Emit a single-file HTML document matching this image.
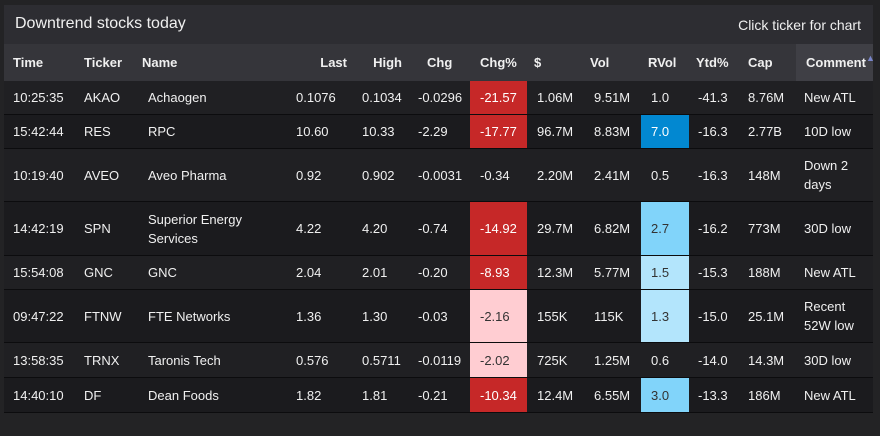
<!DOCTYPE html>
<html><head><style>
body{margin:0;width:880px;height:436px;background:#232325;font-family:"Liberation Sans",Arial,sans-serif;color:#f0f0f0;overflow:hidden;position:relative}
.title{position:absolute;left:4px;top:5px;width:869px;height:39px;background:#2d2d32}
.title .l{position:absolute;left:11px;top:10px;font-size:16px}
.title .r{position:absolute;right:12px;top:12px;font-size:14px}
.row{position:absolute;left:4px;width:869px;display:flex;font-size:13px;border-bottom:1px solid #0c0c0e;box-sizing:border-box}
.row>div{box-sizing:border-box;display:flex;align-items:center;padding-left:8px;line-height:19px}
.hdr{top:44px;height:37px;background:#35353a;font-weight:bold;border:none}
.c1{width:74px;padding-left:9px!important}.c2{width:62px;padding-left:6px!important}.c3{width:148px}.c4{width:66px}.c5{width:56px}.c6{width:60px}.c7{width:57px;padding-left:10px!important}.c8{width:56px;padding-left:10px!important}.c9{width:58px;padding-left:11px!important}.c10{width:48px;padding-left:10px!important}.c11{width:51px;padding-left:9px!important}.c12{width:56px}.c13{width:77px}
.red{background:#c62828;color:#fff}.pink{background:#ffcdd2;color:#333}
.blue{background:#0288d1;color:#fff}.lb{background:#81d4fa;color:#333}.vlb{background:#b3e5fc;color:#333}
.a{background:#202023}.b{background:#1b1b1e}
</style></head><body>
<div class="title"><span class="l">Downtrend stocks today</span><span class="r">Click ticker for chart</span></div>
<div class="row hdr"><div class="c1">Time</div><div class="c2">Ticker</div><div class="c3" style="padding-left:2px">Name</div><div class="c4" style="justify-content:flex-end;padding-right:7px">Last</div><div class="c5" style="justify-content:flex-end;padding-right:8px">High</div><div class="c6" style="padding-left:17px">Chg</div><div class="c7">Chg%</div><div class="c8" style="padding-left:7px!important">$</div><div class="c9" style="padding-left:7px!important">Vol</div><div class="c10" style="padding-left:7px!important">RVol</div><div class="c11" style="padding-left:7px!important">Ytd%</div><div class="c12">Cap</div><div class="c13" style="background:#3f3f45;padding-left:10px">Comment<span style="color:#7986cb;font-size:9px;margin-top:-8px">▲</span></div></div>

<div class="row a" style="top:81px;height:34px"><div class="c1">10:25:35</div><div class="c2">AKAO</div><div class="c3">Achaogen</div><div class="c4">0.1076</div><div class="c5">0.1034</div><div class="c6">-0.0296</div><div class="c7 red">-21.57</div><div class="c8">1.06M</div><div class="c9">9.51M</div><div class="c10">1.0</div><div class="c11">-41.3</div><div class="c12">8.76M</div><div class="c13">New ATL</div></div>
<div class="row b" style="top:115px;height:34px"><div class="c1">15:42:44</div><div class="c2">RES</div><div class="c3">RPC</div><div class="c4">10.60</div><div class="c5">10.33</div><div class="c6">-2.29</div><div class="c7 red">-17.77</div><div class="c8">96.7M</div><div class="c9">8.83M</div><div class="c10 blue">7.0</div><div class="c11">-16.3</div><div class="c12">2.77B</div><div class="c13">10D low</div></div>
<div class="row a" style="top:149px;height:53px"><div class="c1">10:19:40</div><div class="c2">AVEO</div><div class="c3">Aveo Pharma</div><div class="c4">0.92</div><div class="c5">0.902</div><div class="c6">-0.0031</div><div class="c7">-0.34</div><div class="c8">2.20M</div><div class="c9">2.41M</div><div class="c10">0.5</div><div class="c11">-16.3</div><div class="c12">148M</div><div class="c13">Down 2<br>days</div></div>
<div class="row b" style="top:202px;height:54px"><div class="c1">14:42:19</div><div class="c2">SPN</div><div class="c3">Superior Energy<br>Services</div><div class="c4">4.22</div><div class="c5">4.20</div><div class="c6">-0.74</div><div class="c7 red">-14.92</div><div class="c8">29.7M</div><div class="c9">6.82M</div><div class="c10 lb">2.7</div><div class="c11">-16.2</div><div class="c12">773M</div><div class="c13">30D low</div></div>
<div class="row a" style="top:256px;height:34px"><div class="c1">15:54:08</div><div class="c2">GNC</div><div class="c3">GNC</div><div class="c4">2.04</div><div class="c5">2.01</div><div class="c6">-0.20</div><div class="c7 red">-8.93</div><div class="c8">12.3M</div><div class="c9">5.77M</div><div class="c10 vlb">1.5</div><div class="c11">-15.3</div><div class="c12">188M</div><div class="c13">New ATL</div></div>
<div class="row b" style="top:290px;height:53px"><div class="c1">09:47:22</div><div class="c2">FTNW</div><div class="c3">FTE Networks</div><div class="c4">1.36</div><div class="c5">1.30</div><div class="c6">-0.03</div><div class="c7 pink">-2.16</div><div class="c8">155K</div><div class="c9">115K</div><div class="c10 vlb">1.3</div><div class="c11">-15.0</div><div class="c12">25.1M</div><div class="c13">Recent<br>52W low</div></div>
<div class="row a" style="top:343px;height:35px"><div class="c1">13:58:35</div><div class="c2">TRNX</div><div class="c3">Taronis Tech</div><div class="c4">0.576</div><div class="c5">0.5711</div><div class="c6">-0.0119</div><div class="c7 pink">-2.02</div><div class="c8">725K</div><div class="c9">1.25M</div><div class="c10">0.6</div><div class="c11">-14.0</div><div class="c12">14.3M</div><div class="c13">30D low</div></div>
<div class="row b" style="top:378px;height:35px"><div class="c1">14:40:10</div><div class="c2">DF</div><div class="c3">Dean Foods</div><div class="c4">1.82</div><div class="c5">1.81</div><div class="c6">-0.21</div><div class="c7 red">-10.34</div><div class="c8">12.4M</div><div class="c9">6.55M</div><div class="c10 lb">3.0</div><div class="c11">-13.3</div><div class="c12">186M</div><div class="c13">New ATL</div></div>
</body></html>
